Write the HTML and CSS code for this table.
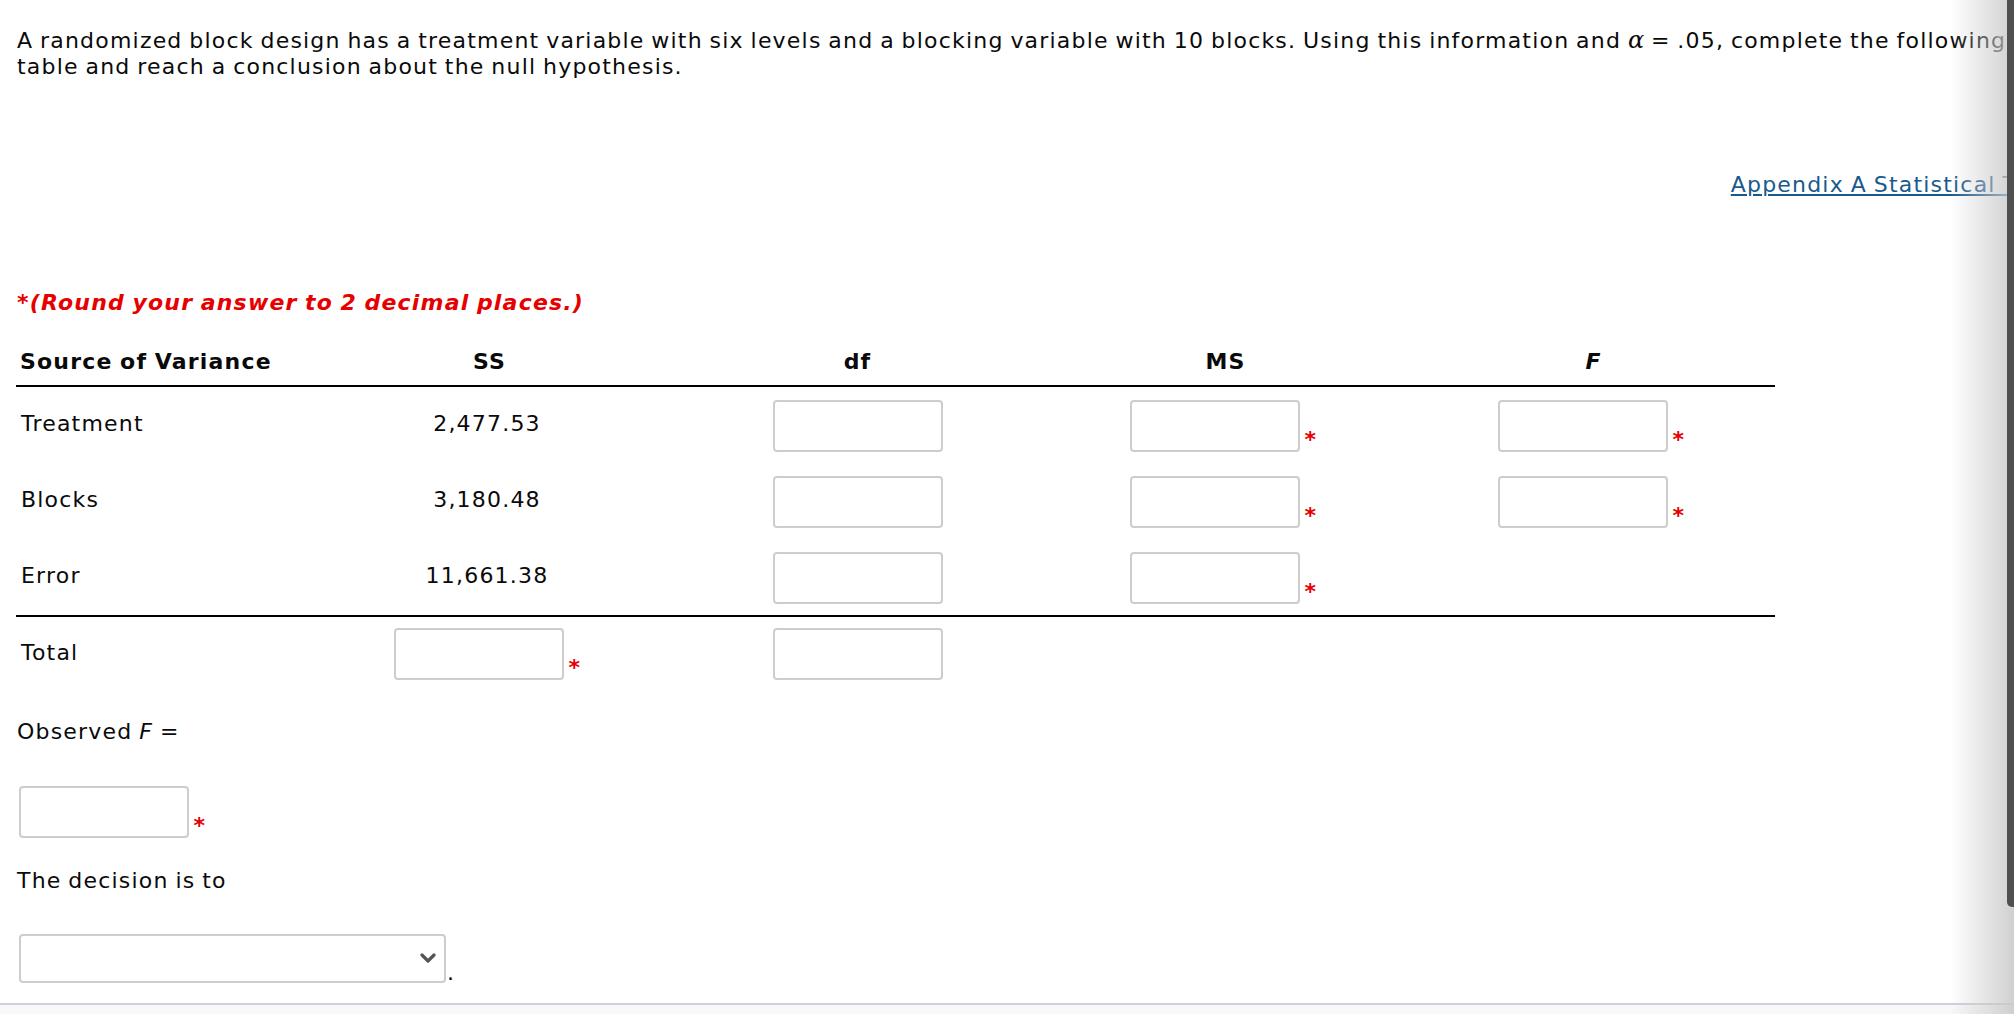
FILE: index.html
```html
<!DOCTYPE html>
<html lang="en">
<head>
<meta charset="utf-8">
<title>Randomized block design</title>
<link rel="stylesheet" href="styles.css">
</head>
<body>
<div class="page">
  <p class="question">A randomized block design has a treatment variable with six levels and a blocking variable with 10 blocks. Using this information and <i class="alpha">α</i> = .05, complete the following table and reach a conclusion about the null hypothesis.</p>
  <div class="appendix"><a href="#">Appendix A Statistical Tables</a></div>
  <p class="note">*(Round your answer to 2 decimal places.)</p>
  <table class="anova">
    <thead>
      <tr>
        <th class="col-src">Source of Variance</th>
        <th class="col">SS</th>
        <th class="col">df</th>
        <th class="col">MS</th>
        <th class="col"><i>F</i></th>
      </tr>
    </thead>
    <tbody>
      <tr>
        <td class="lbl">Treatment</td>
        <td class="val">2,477.53</td>
        <td class="cell"><span class="field plain"><input type="text"></span></td>
        <td class="cell"><span class="field"><input type="text"><span class="req">*</span></span></td>
        <td class="cell"><span class="field"><input type="text"><span class="req">*</span></span></td>
      </tr>
      <tr>
        <td class="lbl">Blocks</td>
        <td class="val">3,180.48</td>
        <td class="cell"><span class="field plain"><input type="text"></span></td>
        <td class="cell"><span class="field"><input type="text"><span class="req">*</span></span></td>
        <td class="cell"><span class="field"><input type="text"><span class="req">*</span></span></td>
      </tr>
      <tr class="last">
        <td class="lbl">Error</td>
        <td class="val">11,661.38</td>
        <td class="cell"><span class="field plain"><input type="text"></span></td>
        <td class="cell"><span class="field"><input type="text"><span class="req">*</span></span></td>
        <td class="cell"></td>
      </tr>
      <tr class="total">
        <td class="lbl">Total</td>
        <td class="cell"><span class="field"><input type="text"><span class="req">*</span></span></td>
        <td class="cell"><span class="field plain"><input type="text"></span></td>
        <td class="cell"></td>
        <td class="cell"></td>
      </tr>
    </tbody>
  </table>
  <p class="observed">Observed <i>F</i> =</p>
  <div class="obs-field"><span class="field"><input type="text"><span class="req">*</span></span></div>
  <p class="decision">The decision is to</p>
  <div class="decision-row">
    <span class="select-wrap">
      <select><option></option><option>reject the null hypothesis</option><option>fail to reject the null hypothesis</option></select>
      <svg class="chev" width="16" height="10" viewBox="0 0 16 10"><path d="M2 2 L8 8 L14 2" fill="none" stroke="#555" stroke-width="3.2" stroke-linecap="round" stroke-linejoin="round"/></svg>
    </span>
    <span class="period">.</span>
  </div>
</div>
<div class="bottom-bar"></div>
<div class="edge-shade"></div>
<div class="edge-bar"></div>
</body>
</html>
```
FILE: styles.css
```css
html, body {
  margin: 0;
  padding: 0;
  background: #fff;
  overflow: hidden;
  width: 2014px;
  height: 1014px;
}
body {
  font-family: "DejaVu Sans", Verdana, sans-serif;
  font-size: 22px;
  line-height: 25.6px;
  letter-spacing: 1.2px;
  word-spacing: -1.4px;
  color: #0a0a0a;
  position: relative;
}
.page {
  width: 2061px;
  padding: 28.4px 0 0 17px;
}
p { margin: 0; }
.question {
  max-width: 2045px;
}
.alpha {
  font-family: "DejaVu Serif", "Liberation Serif", serif;
  font-size: 24px;
  letter-spacing: 0;
}
.appendix {
  margin-top: 92px;
  text-align: right;
}
.appendix a {
  color: #195a8d;
  text-decoration: underline;
  text-underline-offset: 2px;
}
.note {
  margin-top: 93px;
  color: #e60000;
  font-weight: bold;
  font-style: italic;
}
.anova {
  margin-top: 33px;
  margin-left: -1px;
  border-collapse: collapse;
  table-layout: fixed;
  width: 1759px;
}
.anova th {
  box-sizing: border-box;
  font-weight: bold;
  padding: 0 0 11px 5px;
  border-bottom: 2px solid #000;
  text-align: center;
  width: 368px;
}
.anova th.col-src {
  text-align: left;
  width: 287px;
  padding-left: 4px;
}
.anova td {
  padding: 13px 0 11px;
  vertical-align: middle;
  text-align: center;
}
.anova td.lbl {
  text-align: left;
  padding: 13px 0 16px 5px;
}
.anova td.val {
  padding: 13px 0 16px;
}
.anova tr.last td { border-bottom: 2px solid #000; }
.anova tr.total td { padding-top: 11px; padding-bottom: 13px; }
.anova tr.total td.lbl { padding-top: 11px; padding-bottom: 16px; }
.field {
  display: inline-flex;
  align-items: flex-end;
  vertical-align: middle;
}
.field.plain {
  margin-left: 5px;
}
input[type="text"] {
  box-sizing: border-box;
  width: 170px;
  height: 52px;
  margin: 0;
  border: 2px solid #cdcdcd;
  border-radius: 4px;
  background: #fff;
  font: inherit;
  padding: 0 6px;
}
.req {
  color: #e60000;
  font-weight: bold;
  line-height: 22px;
  width: 14px;
  margin-left: 2px;
  text-align: right;
  letter-spacing: 0;
  margin-bottom: 1px;
}
.observed {
  margin-top: 26px;
}
.obs-field {
  margin-top: 41px;
  margin-left: 2px;
  display: flex;
}
.decision {
  margin-top: 30px;
}
.decision-row {
  margin-top: 40px;
  margin-left: 2px;
  display: flex;
  align-items: flex-end;
  height: 49px;
  margin-bottom: 20px;
}
.select-wrap {
  position: relative;
  display: block;
  width: 427px;
  height: 49px;
}
.select-wrap select {
  -webkit-appearance: none;
  appearance: none;
  box-sizing: border-box;
  width: 427px;
  height: 49px;
  border: 2px solid #cdcdcd;
  border-radius: 4px;
  background: #fff;
  font: inherit;
  margin: 0;
}
.chev {
  position: absolute;
  right: 10px;
  top: 19px;
  pointer-events: none;
}
.period {
  line-height: 22px;
  margin-left: 1px;
  margin-bottom: -1px;
}
.bottom-bar {
  border-top: 2px solid #cbd2dd;
  height: 12px;
  background: #f8f8f9;
}
.edge-shade {
  position: absolute;
  top: 0;
  right: 0;
  width: 64px;
  height: 1014px;
  background: linear-gradient(to right, rgba(255,255,255,0), rgba(200,200,200,0.85));
  pointer-events: none;
}
.edge-bar {
  position: absolute;
  top: 0;
  right: 0;
  width: 7px;
  height: 907px;
  background: #4f4f4f;
  border-radius: 0 0 0 5px;
}
```
